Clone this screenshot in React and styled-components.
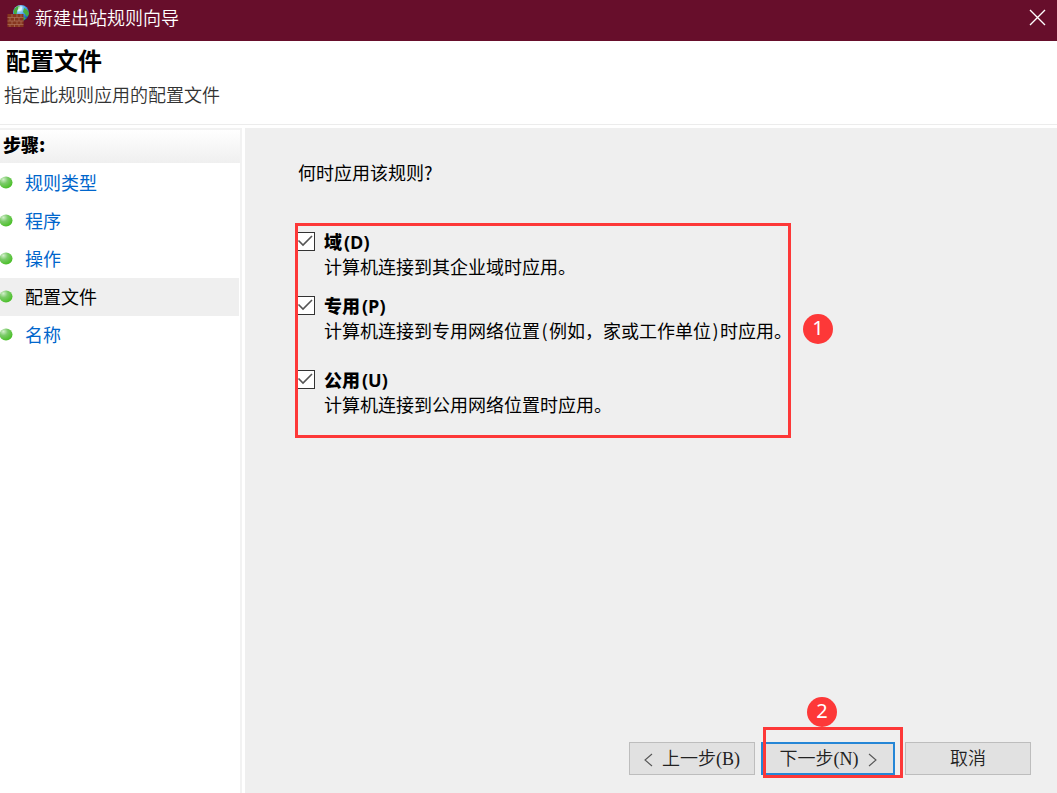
import React, { useState } from "react";
import styled, { createGlobalStyle, css } from "styled-components";

const red = "#fd3838";

const GlobalStyle = createGlobalStyle`
  *, *::before, *::after { box-sizing: border-box; }
  body {
    margin: 0;
    background: #ffffff;
    color: #000000;
    font-family: "Noto Sans CJK SC", sans-serif;
    font-size: 18px;
    line-height: 25px;
  }
`;

const Wizard = styled.div`
  display: flex;
  flex-direction: column;
  min-height: 100vh;
`;

const TitleBar = styled.header`
  display: flex;
  align-items: center;
  height: 41px;
  padding: 0 11px 7px 6px;
  background: #670e2b;
  color: #ffffff;
`;

const TitleText = styled.span`
  flex: 1;
  margin-left: 5px;
  font-weight: 350;
`;

const CloseButton = styled.button`
  display: flex;
  padding: 0;
  border: 0;
  background: none;
  color: #ffffff;
`;

const PageHeader = styled.div`
  height: 84px;
  padding: 3px 4px 0;
  border-bottom: 1px solid #ececec;
`;

const PageTitle = styled.h1`
  margin: 0 0 7px 2px;
  font-size: 24px;
  line-height: 31px;
  font-weight: 700;
`;

const PageHint = styled.p`
  margin: 0;
  color: #333333;
  font-weight: 350;
`;

const Body = styled.div`
  display: grid;
  grid-template-columns: 242px 1fr;
  column-gap: 3px;
  flex: 1;
  padding-top: 3px;
`;

const Sidebar = styled.nav`
  border-top: 2px solid #f2f2f2;
  border-right: 2px solid #f2f2f2;
`;

const StepsTitle = styled.h2`
  height: 33px;
  margin: 0 0 1px;
  padding: 2px 3px 0;
  background: linear-gradient(#ffffff, #efefef);
  font-size: 18px;
  line-height: 25px;
  font-weight: 900;
`;

const StepList = styled.ol`
  margin: 0;
  padding: 0;
  list-style: none;
`;

const StepItem = styled.li`
  display: flex;
  align-items: center;
  height: 38px;
  padding-bottom: 2px;
  margin-right: 1px;
  background: ${(p) => (p.$current ? "#efefef" : "transparent")};
`;

const StepLink = styled.a`
  margin-left: 12px;
  color: ${(p) => (p.$current ? "#000000" : "#0066cc")};
  text-decoration: none;
`;

const Main = styled.main`
  display: flex;
  flex-direction: column;
  padding: 32px 26px 18px 51px;
  background: #efefef;
`;

const Question = styled.p`
  margin: 0 0 44px;
  padding-left: 2px;
`;

const Options = styled.div`
  position: relative;
  align-self: flex-start;
`;

const Option = styled.div`
  display: grid;
  grid-template-columns: 19px auto;
  grid-auto-rows: 25px;
  column-gap: 9px;
  align-items: center;
  margin-bottom: ${(p) => p.$gap || 0}px;
`;

const CheckFrame = styled.span`
  position: relative;
  display: flex;
  height: 19px;

  svg {
    position: absolute;
    inset: 0;
    pointer-events: none;
  }
`;

const CheckInput = styled.input`
  appearance: none;
  width: 19px;
  height: 19px;
  margin: 0;
  border: 1px solid #333333;
  background: #ffffff;
`;

const OptionLabel = styled.label`
  font-weight: 900;
`;

const AccessKey = styled.span`
  margin-left: 2px;
  font-family: "Open Sans", "Noto Sans CJK SC", sans-serif;
  font-weight: 700;
  line-height: 18px;
`;

const OptionText = styled.p`
  grid-column: 2;
  margin: 0;
`;

const HalfWidth = styled.span`
  display: inline-block;
  width: 9px;
  text-align: center;
`;

const Footer = styled.footer`
  display: flex;
  justify-content: flex-end;
  margin-top: auto;
`;

const ButtonSlot = styled.div`
  position: relative;
  margin-left: ${(p) => p.$gap || 0}px;
`;

const Button = styled.button`
  display: flex;
  align-items: center;
  justify-content: center;
  gap: 9px;
  width: ${(p) => (p.$primary ? 134 : 126)}px;
  height: 33px;
  padding: 2px 0 0;
  border: 1px solid #bdbdbd;
  background: #e1e1e1;
  color: #222222;
  font-family: "Liberation Serif", "Noto Sans CJK SC", serif;
  font-size: 18px;
  line-height: 25px;
  font-weight: 350;
  ${(p) =>
    p.$primary &&
    css`
      border: 2px solid #2586d6;
    `}
`;

const Highlight = styled.div`
  position: absolute;
  inset: ${(p) => p.$inset};
  border: 3px solid ${red};
  pointer-events: none;
`;

const Badge = styled.span`
  position: absolute;
  display: flex;
  align-items: center;
  justify-content: center;
  width: 30px;
  height: 30px;
  border-radius: 50%;
  background: ${red};
  color: #ffffff;
  font-family: "Noto Sans", sans-serif;
  font-size: 20px;
  line-height: 28px;
  padding-bottom: 2px;
  ${(p) =>
    p.$side === "right"
      ? css`
          left: calc(100% + 15px);
          top: calc(50% - 17px);
        `
      : css`
          left: calc(50% - 26px);
          bottom: calc(100% + 3px);
        `}
`;

function FirewallIcon() {
  return (
    <svg width="24" height="24" viewBox="0 0 24 24" aria-hidden="true">
      <defs>
        <radialGradient id="globe" cx="0.4" cy="0.25" r="0.8">
          <stop offset="0" stopColor="#e4f6ff" />
          <stop offset="0.45" stopColor="#4aa5ec" />
          <stop offset="1" stopColor="#0d3f9c" />
        </radialGradient>
      </defs>
      <circle cx="15" cy="8" r="8" fill="url(#globe)" />
      <path d="M7.500 6c1-3 3-5 6-5l1 2-3 2-1 4H8zM18 3c3 1 5 4 5 6l-2 3-2-3-2-2zM17 12l3 1-3 3z" fill="#49ad3b" />
      <path d="M12.500 1.500l4 0-1 4-4 1z" fill="#eafaff" opacity="0.7" />
      <path d="M1.500 9h16v13h-16z" fill="#86361f" />
      <path d="M1.500 12.500h16M1.500 16h16M1.500 19.500h16M6 9v3.500M11 9v3.500M15 9v3.500M4 12.500V16M8.500 12.500V16M13 12.500V16M6 16v3.500M11 16v3.500M15 16v3.500M4 19.500V22M8.500 19.500V22M13 19.500V22" stroke="#b0745c" strokeWidth="0.7" />
    </svg>
  );
}

function CloseIcon() {
  return (
    <svg width="17" height="17" viewBox="0 0 17 17" aria-hidden="true">
      <path d="M1 1l15 15M16 1L1 16" stroke="currentColor" strokeWidth="1.4" />
    </svg>
  );
}

function Chevron({ next }) {
  return (
    <svg width="9" height="14" viewBox="0 0 9 14" aria-hidden="true">
      <path
        d={next ? "M1 1l7 6-7 6" : "M8 1L1 7l7 6"}
        fill="none"
        stroke="#555555"
        strokeWidth="1.100"
      />
    </svg>
  );
}

function Bullet() {
  return (
    <svg width="13" height="14" viewBox="0 0 13 14" aria-hidden="true">
      <defs>
        <radialGradient id="bead" cx="0.3" cy="0.25" r="0.75">
          <stop offset="0" stopColor="#d2efcb" />
          <stop offset="0.45" stopColor="#7ccb6a" />
          <stop offset="1" stopColor="#4dc02c" />
        </radialGradient>
      </defs>
      <ellipse cx="6" cy="7.500" rx="6.500" ry="6" fill="url(#bead)" />
    </svg>
  );
}

const steps = ["规则类型", "程序", "操作", "配置文件", "名称"];
const currentStep = 3;

const profiles = [
  { id: "domain", name: "域", accessKey: "D", gap: 14, text: "计算机连接到其企业域时应用。" },
  {
    id: "private",
    name: "专用",
    accessKey: "P",
    gap: 24,
    text: (
      <>
        计算机连接到专用网络位置<HalfWidth>(</HalfWidth>例如，家或工作单位<HalfWidth>)</HalfWidth>时应用。
      </>
    ),
  },
  { id: "public", name: "公用", accessKey: "U", gap: 0, text: "计算机连接到公用网络位置时应用。" },
];

function ProfileOption({ profile }) {
  const [checked, setChecked] = useState(true);
  return (
    <Option $gap={profile.gap}>
      <CheckFrame>
        <CheckInput
          type="checkbox"
          id={profile.id}
          checked={checked}
          onChange={(e) => setChecked(e.target.checked)}
        />
        {checked && (
          <svg width="19" height="19" viewBox="0 0 19 19" aria-hidden="true">
            <path d="M2.500 8.500l4.500 4.500 9-9" fill="none" stroke="#555555" strokeWidth="1.600" />
          </svg>
        )}
      </CheckFrame>
      <OptionLabel htmlFor={profile.id}>
        {profile.name}
        <AccessKey>({profile.accessKey})</AccessKey>
      </OptionLabel>
      <OptionText>{profile.text}</OptionText>
    </Option>
  );
}

export default function App() {
  return (
    <Wizard lang="zh-CN">
      <GlobalStyle />
      <TitleBar>
        <FirewallIcon />
        <TitleText>新建出站规则向导</TitleText>
        <CloseButton type="button" aria-label="关闭">
          <CloseIcon />
        </CloseButton>
      </TitleBar>
      <PageHeader>
        <PageTitle>配置文件</PageTitle>
        <PageHint>指定此规则应用的配置文件</PageHint>
      </PageHeader>
      <Body>
        <Sidebar>
          <StepsTitle>步骤:</StepsTitle>
          <StepList>
            {steps.map((step, i) => (
              <StepItem key={step} $current={i === currentStep}>
                <Bullet />
                <StepLink href="#" $current={i === currentStep}>
                  {step}
                </StepLink>
              </StepItem>
            ))}
          </StepList>
        </Sidebar>
        <Main>
          <Question>何时应用该规则?</Question>
          <Options>
            {profiles.map((profile) => (
              <ProfileOption key={profile.id} profile={profile} />
            ))}
            <Highlight $inset="-6px 1px -21px -1px">
              <Badge $side="right">1</Badge>
            </Highlight>
          </Options>
          <Footer>
            <ButtonSlot>
              <Button type="button">
                <Chevron />
                <span>上一步(B)</span>
              </Button>
            </ButtonSlot>
            <ButtonSlot $gap={6}>
              <Button type="button" $primary>
                <span>下一步(N)</span>
                <Chevron next />
              </Button>
              <Highlight $inset="-15px -8px -3px 2px">
                <Badge $side="top">2</Badge>
              </Highlight>
            </ButtonSlot>
            <ButtonSlot $gap={10}>
              <Button type="button">取消</Button>
            </ButtonSlot>
          </Footer>
        </Main>
      </Body>
    </Wizard>
  );
}
